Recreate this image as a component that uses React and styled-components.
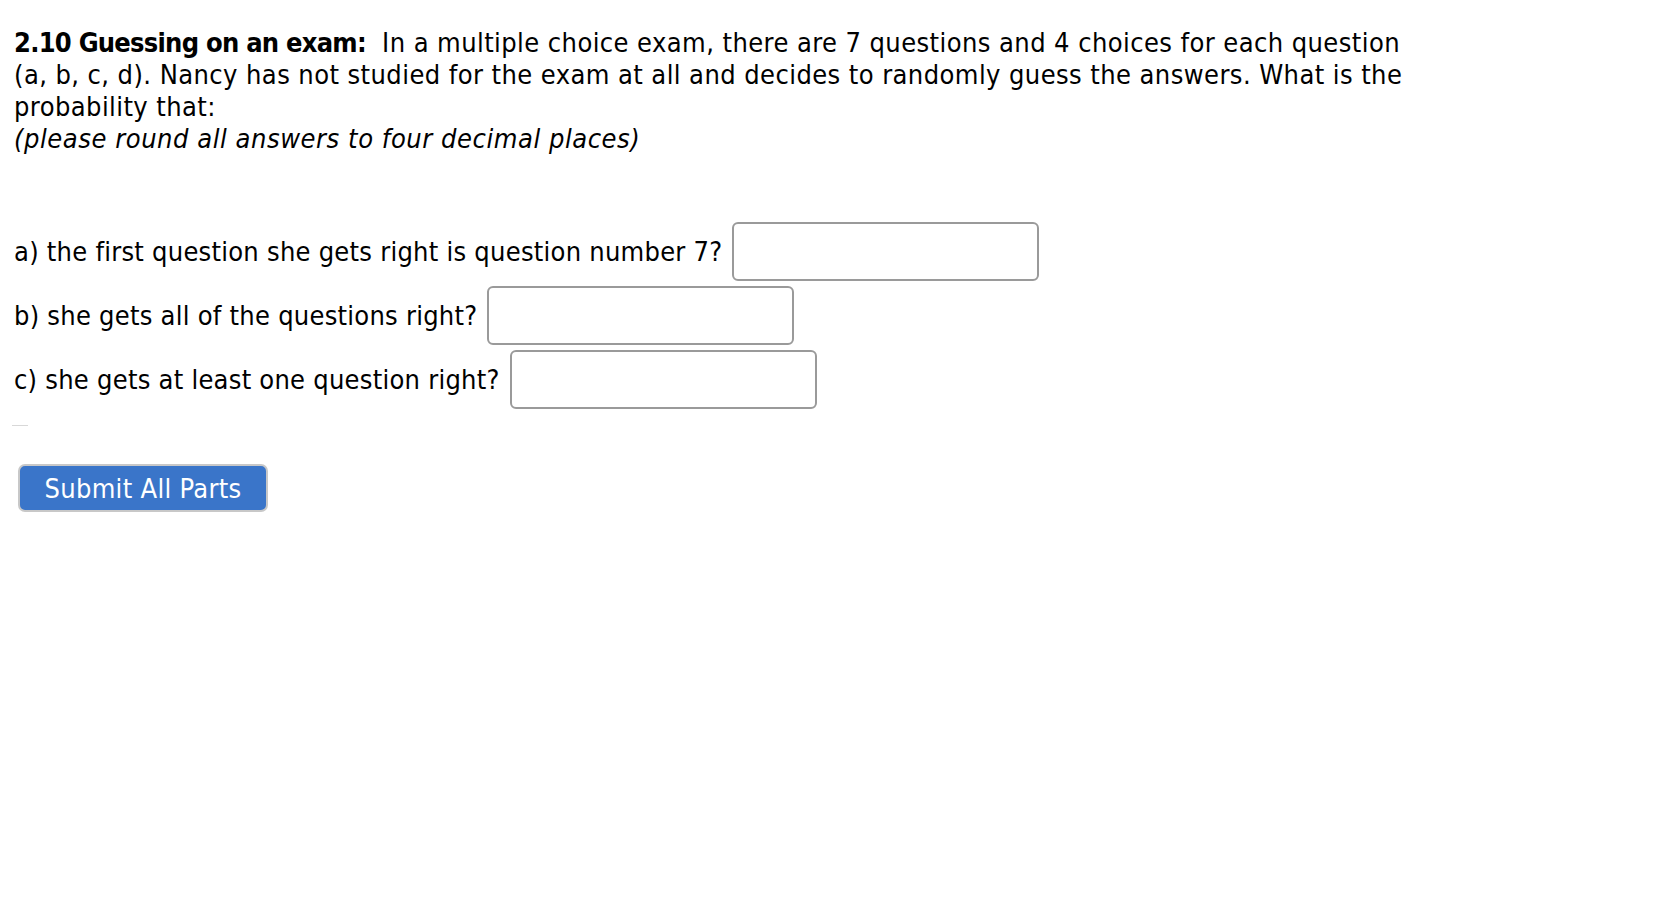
import React from "react";
import styled, { createGlobalStyle } from "styled-components";

const Global = createGlobalStyle`
  html, body { margin: 0; padding: 0; background: #ffffff; }
  body { font-family: "DejaVu Sans Condensed", "DejaVu Sans", sans-serif; color: #000; }
`;

const Page = styled.main`
  padding: 27px 0 0 14px;
  font-size: 27px;
  line-height: 32px;
`;

const Prompt = styled.p`
  margin: 0;
  white-space: nowrap;
  letter-spacing: 0.42px;
`;

const Title = styled.b`
  font-weight: bold;
  letter-spacing: -0.75px;
`;

const Note = styled.i`
  font-style: italic;
  letter-spacing: 0.55px;
`;

const Parts = styled.div`
  display: flex;
  flex-direction: column;
  gap: 5px;
  margin-top: 67px;
`;

const Row = styled.label`
  display: flex;
  align-items: center;
  gap: 10px;
  white-space: nowrap;
  letter-spacing: 0.25px;
`;

const Answer = styled.input`
  box-sizing: border-box;
  width: 307px;
  height: 59px;
  border: 2px solid #9a9a9a;
  border-radius: 6px;
  background: #fff;
  font: inherit;
  padding: 0 10px;
  outline: none;
`;

const Rule = styled.hr`
  width: 16px;
  margin: 16px 0 0 -2px;
  border: 0;
  border-top: 1px solid #d8d8d8;
`;

const Submit = styled.button`
  margin: 38px 0 0 4px;
  box-sizing: border-box;
  width: 250px;
  height: 48px;
  background: #3a75c9;
  color: #fff;
  border: 2px solid #c8c8c8;
  border-radius: 7px;
  font-family: inherit;
  font-size: 27px;
  letter-spacing: 0.3px;
  padding: 0;
  cursor: pointer;
`;

const parts = [
  "a) the first question she gets right is question number 7?",
  "b) she gets all of the questions right?",
  "c) she gets at least one question right?",
];

export default function App() {
  return (
    <>
      <Global />
      <Page>
        <Prompt>
          <Title>2.10 Guessing on an exam:</Title>&nbsp; In a multiple choice exam, there are 7 questions and 4 choices for each question
          <br />
          (a, b, c, d). Nancy has not studied for the exam at all and decides to randomly guess the answers. What is the
          <br />
          probability that:
          <br />
          <Note>(please round all answers to four decimal places)</Note>
        </Prompt>
        <Parts>
          {parts.map((p) => (
            <Row key={p}>
              {p}
              <Answer type="text" />
            </Row>
          ))}
        </Parts>
        <Rule />
        <Submit type="button">Submit All Parts</Submit>
      </Page>
    </>
  );
}
